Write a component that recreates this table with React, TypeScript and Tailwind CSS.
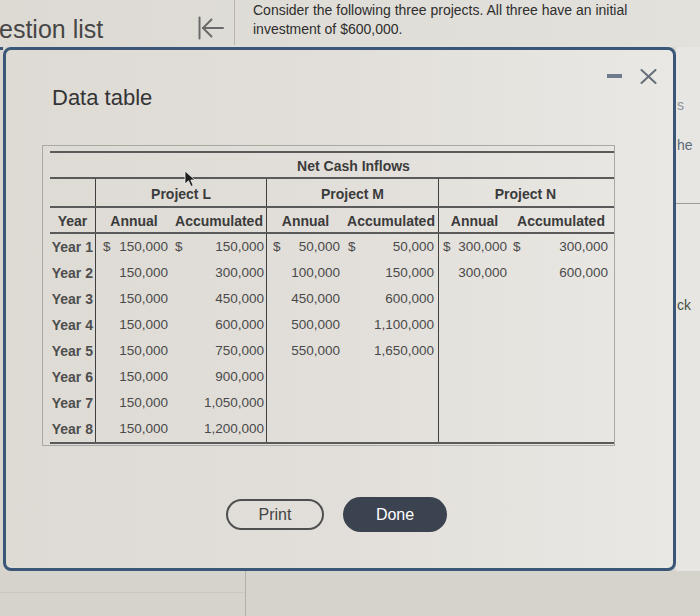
import React from "react";

const cols = "grid grid-cols-[45px_77px_94px_78px_94px_72px_102px]";

interface Row {
  year: string;
  lAnnual: string;
  lAcc: string;
  mAnnual?: string;
  mAcc?: string;
  nAnnual?: string;
  nAcc?: string;
}

const rows: Row[] = [
  { year: "Year 1", lAnnual: "150,000", lAcc: "150,000", mAnnual: "50,000", mAcc: "50,000", nAnnual: "300,000", nAcc: "300,000" },
  { year: "Year 2", lAnnual: "150,000", lAcc: "300,000", mAnnual: "100,000", mAcc: "150,000", nAnnual: "300,000", nAcc: "600,000" },
  { year: "Year 3", lAnnual: "150,000", lAcc: "450,000", mAnnual: "450,000", mAcc: "600,000" },
  { year: "Year 4", lAnnual: "150,000", lAcc: "600,000", mAnnual: "500,000", mAcc: "1,100,000" },
  { year: "Year 5", lAnnual: "150,000", lAcc: "750,000", mAnnual: "550,000", mAcc: "1,650,000" },
  { year: "Year 6", lAnnual: "150,000", lAcc: "900,000" },
  { year: "Year 7", lAnnual: "150,000", lAcc: "1,050,000" },
  { year: "Year 8", lAnnual: "150,000", lAcc: "1,200,000" },
];

const Cell = ({ value, dollar, className }: { value?: string; dollar: boolean; className: string }) => (
  <div className={`flex items-center justify-between ${className}`}>
    <span>{dollar && value ? "$" : ""}</span>
    <span>{value ?? ""}</span>
  </div>
);

const App = () => {
  return (
    <div className="relative w-[700px] h-[616px] overflow-hidden flex flex-col bg-[#d9d6d0] font-['Liberation_Sans',Arial,sans-serif]">
      {/* top bar */}
      <div className="h-[47px] flex items-start shrink-0 bg-linear-to-r from-[#dddad4] to-[#e3e1dc]">
        <div className="w-[234px] h-full flex items-start">
          <span className="ml-[-1px] mt-[17px] text-[25px] leading-none text-[#464646] whitespace-nowrap">
            estion list
          </span>
          <svg className="ml-auto mr-[10px] mt-[16px]" width="26" height="24" viewBox="0 0 26 24" fill="none" stroke="#6a6a6a" strokeWidth="2" strokeLinecap="round">
            <path d="M1.5 1.5V22.5" />
            <path d="M5 12H25" />
            <path d="M13.5 3.5L5 12L13.5 20.5" />
          </svg>
        </div>
        <div className="w-px h-[45px] bg-[#b8b5af]" />
        <div className="pl-[18px] pt-[1px] text-[14px] leading-[19px] text-[#2e2e2e]">
          Consider the following three projects. All three have an initial
          <br />
          investment of $600,000.
        </div>
      </div>

      {/* modal + right edge */}
      <div className="flex h-[524px] shrink-0">
        <div className="w-[3px] h-[3px] bg-[#3a5778]" />
        <div className="w-[673px] h-full border-[3px] border-[#3a5778] rounded-[8px] flex flex-col bg-linear-to-r from-[#dedbd5] via-[#e2dfda] to-[#eae8e4]">
          <div className="mt-[18px] h-[16px] flex items-center justify-end gap-[18px] pr-[16px]">
            <div className="w-[15px] h-[4px] bg-[#6c7b8d]" />
            <svg width="17" height="15" viewBox="0 0 17 15" stroke="#656e79" strokeWidth="2" strokeLinecap="round">
              <path d="M1.5 1L15.5 14" />
              <path d="M15.5 1L1.5 14" />
            </svg>
          </div>
          <div className="mt-[1px] ml-[46px] text-[22px] leading-[26px] text-[#343434]">Data table</div>

          {/* data table */}
          <div className="mt-[34px] ml-[36px] w-[573px] h-[301px] border border-[#aaa8a2] pt-[5px] pl-[7px] text-[13.5px] text-[#4a4a4a]">
            <div className={`${cols} h-[28px] border-y-2 border-[#5a5a5a]`}>
              <div className="col-start-2 col-span-6 flex items-center justify-center pt-[2px] text-[14px] font-bold text-[#3b3b3b]">
                Net Cash Inflows
              </div>
            </div>
            <div className={`${cols} h-[29px] border-b-2 border-[#5a5a5a] text-[14px] font-bold text-[#3b3b3b]`}>
              <div />
              <div className="col-span-2 border-l border-l-[#404040] flex items-center justify-center pt-[3px]">Project L</div>
              <div className="col-span-2 border-l border-l-[#404040] flex items-center justify-center pt-[3px]">Project M</div>
              <div className="col-span-2 border-l border-l-[#404040] flex items-center justify-center pt-[3px]">Project N</div>
            </div>
            <div className={`${cols} h-[26px] border-b-2 border-[#5a5a5a] text-[14px] font-bold text-[#3b3b3b]`}>
              <div className="flex items-center justify-center pt-[2px]">Year</div>
              <div className="border-l border-l-[#404040] flex items-center justify-center pt-[2px]">Annual</div>
              <div className="flex items-center justify-center pt-[2px]">Accumulated</div>
              <div className="border-l border-l-[#404040] flex items-center justify-center pt-[2px]">Annual</div>
              <div className="flex items-center justify-center pt-[2px]">Accumulated</div>
              <div className="border-l border-l-[#404040] flex items-center justify-center pt-[2px]">Annual</div>
              <div className="flex items-center justify-center pt-[2px]">Accumulated</div>
            </div>
            {rows.map((r, i) => (
              <div key={r.year} className={`${cols} h-[26px]`}>
                <div className="flex items-center justify-end pr-[2px] text-[14px] font-bold text-[#4e4e4e]">{r.year}</div>
                <Cell value={r.lAnnual} dollar={i === 0} className="border-l border-l-[#404040] pl-[7px] pr-[4px]" />
                <Cell value={r.lAcc} dollar={i === 0} className="pl-[3px] pr-[2px]" />
                <Cell value={r.mAnnual} dollar={i === 0} className="border-l border-l-[#404040] pl-[6px] pr-[4px]" />
                <Cell value={r.mAcc} dollar={i === 0} className="pl-[4px] pr-[4px]" />
                <Cell value={r.nAnnual} dollar={i === 0} className="border-l border-l-[#404040] pl-[4px] pr-[3px]" />
                <Cell value={r.nAcc} dollar={i === 0} className="pl-[3px] pr-[4px]" />
              </div>
            ))}
            <div className="h-[2px] bg-[#5a5a5a]" />
          </div>

          {/* buttons */}
          <div className="mt-[51px] ml-[220px] flex items-center gap-[19px]">
            <button className="w-[98px] h-[31px] rounded-full border-2 border-[#4f4f4f] text-[16px] text-[#444]">Print</button>
            <button className="w-[104px] h-[35px] rounded-full bg-[#3c4350] text-[16px] text-white">Done</button>
          </div>
        </div>

        <div className="flex-1 flex flex-col bg-[#e8e6e3] text-[14px] leading-[16px]">
          <span className="mt-[50px] pl-px text-[#8c939b]">s</span>
          <span className="mt-[24px] pl-px text-[#5b6a78]">he</span>
          <div className="mt-[50px] h-px bg-[#9c9a94]" />
          <span className="mt-[93px] pl-px text-[#465040]">ck</span>
        </div>
      </div>

      {/* bottom strip */}
      <div className="h-[45px] flex shrink-0 bg-[#d6d3cd]">
        <div className="w-[246px] h-full border-r border-[#b3b0a9]">
          <div className="h-[22px] border-b border-[#cac7c0]" />
        </div>
      </div>

      {/* mouse pointer */}
      <svg className="absolute left-[184px] top-[170px]" width="12" height="18" viewBox="0 0 12 18">
        <path d="M1 1L1 14L4.5 10.8L7 16.5L9.2 15.5L6.8 10H11Z" fill="#1e1e1e" stroke="#f2f2f2" strokeWidth="0.8" />
      </svg>
    </div>
  );
};

export default App;
